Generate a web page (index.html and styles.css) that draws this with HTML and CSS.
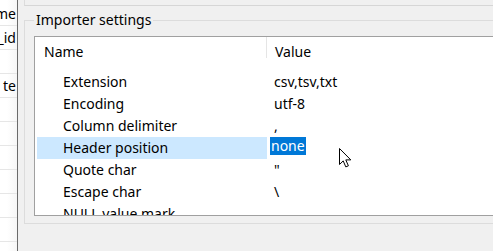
FILE: index.html
```html
<!DOCTYPE html>
<html>
<head>
<meta charset="utf-8">
<link rel="stylesheet" href="styles.css">
</head>
<body>
<div class="window">
  <div class="side">
    <div class="cell"><span>me</span></div>
    <div class="cell"><span>_id</span></div>
    <div class="cell"></div>
    <div class="cell"><span>te</span></div>
    <div class="cell"></div>
    <div class="cell"></div>
    <div class="cell"></div>
    <div class="cell"></div>
    <div class="cell"></div>
    <div class="cell"></div>
    <div class="cell"></div>
  </div>
  <div class="main">
    <div class="topbox"></div>
    <fieldset class="group">
      <legend class="group-title">Importer settings</legend>
      <div class="tree">
        <div class="thead">
          <div class="th th-name">Name</div>
          <div class="th th-value">Value</div>
        </div>
        <div class="row"><div class="name">Extension</div><div class="val">csv,tsv,txt</div></div>
        <div class="row"><div class="name">Encoding</div><div class="val">utf-8</div></div>
        <div class="row"><div class="name">Column delimiter</div><div class="val">,</div></div>
        <div class="row row-sel"><div class="name">Header position</div><div class="val val-edit"><span class="selected">none</span></div></div>
        <div class="row"><div class="name">Quote char</div><div class="val">"</div></div>
        <div class="row"><div class="name">Escape char</div><div class="val">\</div></div>
        <div class="row"><div class="name">NULL value mark</div><div class="val"></div></div>
      </div>
    </fieldset>
  </div>
  <svg class="cursor" width="14" height="21" viewBox="0 0 14 21">
    <path d="M0.5 0.5 L0.5 16.5 L4.2 12.9 L6.8 18.9 L9.4 17.8 L6.8 11.9 L11.8 11.9 Z" fill="#fff" stroke="#000" stroke-width="1" stroke-linejoin="miter"/>
  </svg>
</div>
</body>
</html>
```
FILE: styles.css
```css
html, body {
  margin: 0;
  padding: 0;
}
body {
  background: #f0f0f0;
  font-family: "Noto Sans", "DejaVu Sans", sans-serif;
  font-size: 14px;
  color: #000;
}
.window {
  position: relative;
  width: 493px;
  height: 251px;
  overflow: hidden;
  display: flex;
}
.side {
  width: 17px;
  flex: none;
  background: linear-gradient(to right, #fff 40%, #f6f6f6);
  border-right: 1px solid #6a6a6a;
  padding-top: 2px;
  box-sizing: content-box;
}
.cell {
  height: 23px;
  border-bottom: 1px solid #e6e6e6;
  display: flex;
  justify-content: flex-end;
  align-items: center;
  white-space: nowrap;
  line-height: 20px;
}
.cell span {
  flex: none;
  padding-right: 1px;
}
.main {
  flex: 1;
  padding-left: 6px;
  overflow: hidden;
}
.topbox {
  height: 5px;
  width: 520px;
  border-left: 1px solid #dcdcdc;
  border-bottom: 1px solid #d6d6d6;
  margin-bottom: 4px;
}
.group {
  margin: 0;
  width: 540px;
  border: 1px solid #dcdcdc;
  padding: 6px 0 7px 9px;
  min-width: 0;
}
.group-title {
  padding: 0 2px;
  line-height: 20px;
  height: 20px;
}
.tree {
  background: #fff;
  border: 1px solid #a0a0a0;
  height: 178px;
  overflow: hidden;
}
.thead {
  height: 34px;
  display: flex;
  align-items: flex-start;
}
.th {
  line-height: 20px;
}
.th-name {
  width: 222px;
  padding-left: 9px;
  border-right: 1px solid #e5e5e5;
  padding-top: 5px;
  height: 16px;
  box-sizing: content-box;
}
.th-value {
  padding-left: 8px;
  padding-top: 5px;
  height: 16px;
  box-sizing: content-box;
}
.row {
  height: 22px;
  display: flex;
  align-items: center;
  line-height: 20px;
  white-space: nowrap;
}
.name {
  width: 204px;
  margin-left: 2px;
  padding-left: 26px;
  height: 22px;
  line-height: 22px;
  flex: none;
}
.row-sel .name {
  background: #cce8ff;
}
.val {
  padding-left: 7px;
}
.val-edit {
  padding-left: 3px;
  align-self: flex-start;
  margin-top: -1px;
}
.selected {
  background: #0078d7;
  color: #fff;
  padding: 0 1px;
  height: 18px;
  line-height: 18px;
  display: inline-block;
}
.cursor {
  position: absolute;
  left: 339px;
  top: 148px;
}
```
